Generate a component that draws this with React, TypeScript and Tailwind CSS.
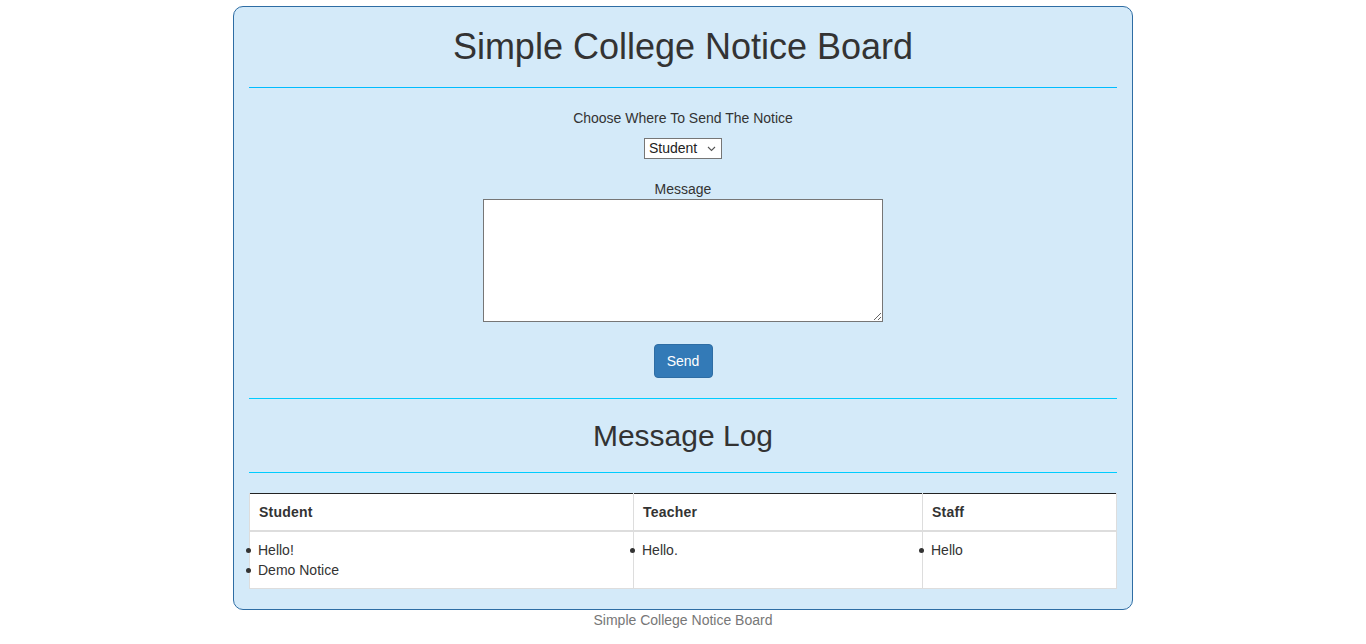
import React from 'react';

const font = { fontFamily: '"Liberation Sans", Arial, Helvetica, sans-serif' };

const logs = {
  Student: ['Hello!', 'Demo Notice'],
  Teacher: ['Hello.'],
  Staff: ['Hello'],
};

function NoticeList({ items }: { items: string[] }) {
  return (
    <ul className="list-none pl-0 m-0">
      {items.map((m) => (
        <li
          key={m}
          className="relative leading-5 before:absolute before:left-[-12px] before:top-[8px] before:h-[5px] before:w-[5px] before:rounded-full before:bg-[#333] before:content-['']"
        >
          {m}
        </li>
      ))}
    </ul>
  );
}

export default function App() {
  return (
    <div className="min-h-screen bg-white text-[14px] leading-5 text-[#333]" style={font}>
      <div className="pt-[6px] flex flex-col items-center">
        <div className="w-[900px] rounded-[10px] border border-[#2e6da4] bg-[#d4eaf9] px-[15px]">
          <h1 className="mt-5 mb-0 text-center text-[36px] leading-[40px] font-normal">
            Simple College Notice Board
          </h1>
          <div className="my-5 h-0 border-t border-solid border-sky-400" />

          <div className="flex flex-col items-center">
            <label className="leading-5">Choose Where To Send The Notice</label>
            <div className="relative mt-[10px] flex">
              <select
                className="block appearance-none h-[21px] w-[78px] border border-[#767676] bg-white pl-[4px] pr-5 text-[14px] leading-[19px] text-[#222] outline-none"
                style={font}
                defaultValue="Student"
              >
                <option>Student</option>
                <option>Teacher</option>
                <option>Staff</option>
              </select>
              <svg
                className="pointer-events-none absolute right-[6px] top-[8px]"
                width="9"
                height="6"
                viewBox="0 0 9 6"
                fill="none"
              >
                <path d="M1 1l3.5 3.5L8 1" stroke="#555" strokeWidth="1.1" />
              </svg>
            </div>

            <label className="mt-[20px] leading-5">Message</label>
            <textarea className="block h-[123px] w-[400px] border border-[#767676] bg-white outline-none" />

            <button className="mt-[22px] h-[34px] w-[59px] rounded-[4px] border border-[#2e6da4] bg-[#337ab7] text-[14px] text-white">
              Send
            </button>
          </div>

          <div className="my-5 h-0 border-t border-solid border-[#00ccff]" />
          <h2 className="mt-0 mb-0 text-center text-[30px] leading-[33px] font-normal">Message Log</h2>
          <div className="my-5 h-0 border-t border-solid border-[#00ccff]" />

          <table className="w-full border-collapse bg-white mb-5">
            <thead>
              <tr className="border-t border-t-[#222]">
                <th className="w-[384px] border-x border-x-[#ddd] border-b-2 border-b-[#ddd] px-[9px] py-[8px] text-left font-bold leading-5 tracking-[0.2px]">
                  Student
                </th>
                <th className="w-[289px] border-x border-x-[#ddd] border-b-2 border-b-[#ddd] px-[9px] py-[8px] text-left font-bold leading-5 tracking-[0.2px]">
                  Teacher
                </th>
                <th className="border-x border-x-[#ddd] border-b-2 border-b-[#ddd] px-[9px] py-[8px] text-left font-bold leading-5 tracking-[0.2px]">
                  Staff
                </th>
              </tr>
            </thead>
            <tbody>
              <tr>
                {Object.entries(logs).map(([k, items]) => (
                  <td key={k} className="h-[57px] border border-[#ddd] px-[8px] pt-[8px] pb-[8px] align-top">
                    <NoticeList items={items} />
                  </td>
                ))}
              </tr>
            </tbody>
          </table>
        </div>
        <p className="leading-5 text-[#777]">Simple College Notice Board</p>
      </div>
    </div>
  );
}
